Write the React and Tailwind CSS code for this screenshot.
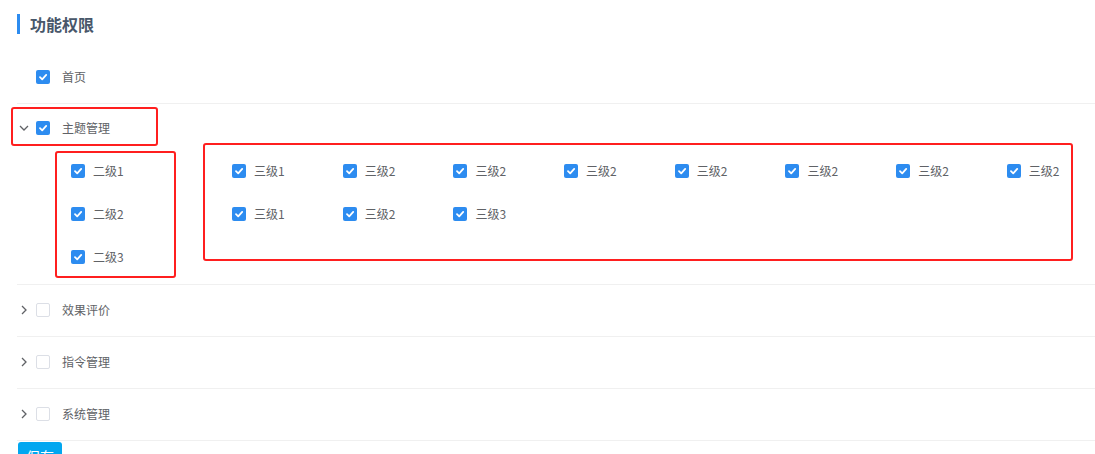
import React from 'react';

const FONT = { fontFamily: '"Noto Sans CJK SC", "Noto Sans", sans-serif' };

const Check = ({ on }) =>
  on ? (
    <span className="w-[14px] h-[14px] rounded-[2px] bg-[#2d8cf0] flex items-center justify-center shrink-0">
      <svg width="10" height="10" viewBox="0 0 10 10">
        <path d="M2 5.2 L4.2 7.3 L8.2 2.9" fill="none" stroke="#fff" strokeWidth="1.8" strokeLinecap="round" strokeLinejoin="round" />
      </svg>
    </span>
  ) : (
    <span className="w-[14px] h-[14px] rounded-[2px] border border-[#dcdfe6] bg-white shrink-0" />
  );

const Arrow = ({ open }) => (
  <span className="w-[19px] flex items-center shrink-0">
    {open ? (
      <svg width="10" height="6" viewBox="0 0 10 6" className="ml-[2px]">
        <path d="M1 1 L5 5 L9 1" fill="none" stroke="#606266" strokeWidth="1.3" />
      </svg>
    ) : (
      <svg width="6" height="10" viewBox="0 0 6 10" className="ml-[4px]">
        <path d="M1 1 L5 5 L1 9" fill="none" stroke="#606266" strokeWidth="1.3" />
      </svg>
    )}
  </span>
);

const Item = ({ label, on = true }) => (
  <div className="flex items-center gap-2 h-[43px]">
    <Check on={on} />
    <span className="text-[12px] text-[#606266]">{label}</span>
  </div>
);

const level3 = [
  ['三级1', '三级2', '三级2', '三级2', '三级2', '三级2', '三级2', '三级2'],
  ['三级1', '三级2', '三级3'],
];

const TopRow = ({ label, on, arrow, open }) => (
  <div className="h-[51px] flex items-center">
    {arrow ? <Arrow open={open} /> : <span className="w-[19px] shrink-0" />}
    <Check on={on} />
    <span className="ml-3 text-[12px] text-[#606266]">{label}</span>
  </div>
);

export default function App() {
  return (
    <div className="relative w-[1095px] h-[454px] overflow-hidden bg-white" style={FONT}>
      <div className="pl-[17px]">
        <div className="mt-[14px] h-[20px] border-l-[3px] border-[#2d8cf0] pl-[10px] flex items-center">
          <span className="text-[16px] font-bold text-[#48576a] leading-none">功能权限</span>
        </div>

        <div className="mt-[17px]">
          <div className="border-b border-[#f0f0f0] pb-px">
            <TopRow label="首页" on />
          </div>

          <div className="border-b border-[#f0f0f0] pb-[6px]">
            <div className="h-[45px] flex items-center pt-[2px]">
              <Arrow open />
              <Check on />
              <span className="ml-3 text-[12px] text-[#606266]">主题管理</span>
            </div>
            <div className="flex">
              <div className="w-[215px] pl-[54px] shrink-0">
                <Item label="二级1" />
                <Item label="二级2" />
                <Item label="二级3" />
              </div>
              <div>
                {level3.map((row, i) => (
                  <div key={i} className="grid grid-cols-[repeat(7,110.7px)_auto]">
                    {row.map((t, j) => (
                      <Item key={j} label={t} />
                    ))}
                  </div>
                ))}
              </div>
            </div>
          </div>

          {['效果评价', '指令管理', '系统管理'].map((t) => (
            <div key={t} className="border-b border-[#f0f0f0] pb-px">
              <div className="-mt-px">
                <TopRow label={t} arrow />
              </div>
            </div>
          ))}

          <button className="mt-[1px] ml-px w-[44px] h-[28px] rounded-[3px] bg-[#02a7f0] text-white text-[14px] leading-none">
            保存
          </button>
        </div>
      </div>

      <div className="absolute left-[11px] top-[107px] w-[147px] h-[39px] border-2 border-[#ff1f1f] rounded-[3px]" />
      <div className="absolute left-[55px] top-[151px] w-[121px] h-[127px] border-2 border-[#ff1f1f] rounded-[3px]" />
      <div className="absolute left-[203px] top-[143px] w-[870px] h-[118px] border-2 border-[#ff1f1f] rounded-[3px]" />
    </div>
  );
}
